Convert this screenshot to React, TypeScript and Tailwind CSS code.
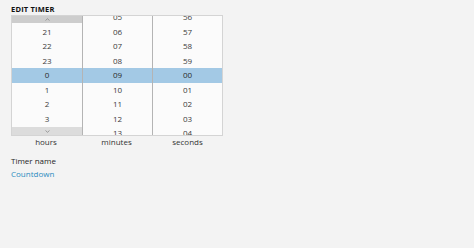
import React from 'react';

const hours = ['20', '21', '22', '23', '0', '1', '2', '3', '4'];
const minutes = ['05', '06', '07', '08', '09', '10', '11', '12', '13'];
const seconds = ['56', '57', '58', '59', '00', '01', '02', '03', '04'];

function Column({ items, scroll, border }: { items: string[]; scroll?: boolean; border?: boolean }) {
  return (
    <div className={`relative w-[70px] h-[119px] overflow-hidden bg-[#fbfbfb] ${border ? 'border-l border-[#b4b4b4]' : ''}`}>
      <div className="mt-[-6px]">
        {items.map((v, i) => (
          <div
            key={i}
            className={`h-[14.5px] flex items-center justify-center text-[8px] ${i === 4 ? 'bg-[#a3c9e5] text-[#2a2a2a]' : 'text-[#3a3a3a]'}`}
          >
            {v}
          </div>
        ))}
      </div>
      {scroll && (
        <>
          <div className="absolute top-0 left-0 right-0 h-[7px] bg-[#cdcdcd] flex items-center justify-center">
            <svg width="5" height="3" viewBox="0 0 5 3"><path d="M0.5 2.5 L2.5 0.7 L4.5 2.5" stroke="#8a8a8a" strokeWidth="0.8" fill="none" /></svg>
          </div>
          <div className="absolute bottom-0 left-0 right-0 h-[8px] bg-[#dcdcdc] flex items-center justify-center">
            <svg width="5" height="3" viewBox="0 0 5 3"><path d="M0.5 0.5 L2.5 2.3 L4.5 0.5" stroke="#8a8a8a" strokeWidth="0.8" fill="none" /></svg>
          </div>
        </>
      )}
    </div>
  );
}

export default function App() {
  return (
    <div className="w-[474px] h-[248px] bg-[#f3f3f3] px-[11px] pt-[3px]" style={{ fontFamily: '"Open Sans", "Noto Sans", sans-serif' }}>
      <div className="text-[7.5px] font-bold text-[#111] tracking-[0.2px] h-[12px] leading-[12px]">EDIT TIMER</div>
      <div className="flex w-fit border border-[#d4d4d4]">
        <Column items={hours} scroll />
        <Column items={minutes} border />
        <Column items={seconds} border />
      </div>
      <div className="flex w-[212px] h-[11px] items-center text-[8px] leading-[11px] text-[#333]">
        <div className="w-[70px] text-center">hours</div>
        <div className="w-[71px] text-center">minutes</div>
        <div className="w-[71px] text-center">seconds</div>
      </div>
      <div className="mt-[7px] text-[8px] text-[#1e1e1e] leading-[13px]">Timer name</div>
      <div className="text-[8px] text-[#2b8cc0] leading-[13px]">Countdown</div>
    </div>
  );
}
